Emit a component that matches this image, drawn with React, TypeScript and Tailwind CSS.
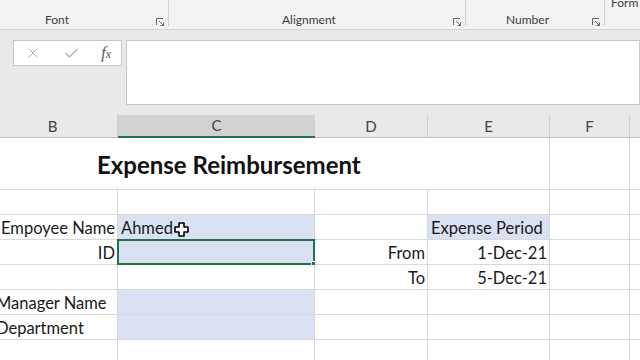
import { X, Check } from "lucide-react";

type CellProps = {
  text?: string;
  align?: "left" | "right";
  fill?: boolean;
  selected?: boolean;
  indent?: boolean;
};

function Cell({ text, align = "left", fill, selected, indent }: CellProps) {
  return (
    <div
      className={`relative h-[25px] border-r border-b border-[#d9d9d9] flex items-center overflow-visible whitespace-nowrap pt-[3px] pr-[2px] text-[16.5px] text-[#1a1a1a] ${
        indent ? "pl-[8px]" : "pl-[3px]"
      } ${align === "right" ? "justify-end" : "justify-start"} ${fill ? "bg-[#d9e1f2]" : "bg-white"}`}
    >
      {text}
      {selected && (
        <div className="absolute -left-[1px] -top-[1px] right-[-1px] bottom-[-1px] border-2 border-[#217346]">
          <div className="absolute -right-[4px] -bottom-[4px] w-[6px] h-[6px] bg-[#217346] border border-white" />
        </div>
      )}
    </div>
  );
}

function Launcher() {
  return (
    <svg width="8" height="8" viewBox="0 0 8 8" className="text-[#666]">
      <path d="M0.5 7V0.5H7" fill="none" stroke="currentColor" strokeWidth="1" />
      <path d="M3 3L7.5 7.5M4.5 7.5H7.5V4.5" fill="none" stroke="currentColor" strokeWidth="1" />
    </svg>
  );
}

function RibbonGroup({ label, width, pad }: { label: string; width: string; pad: string }) {
  return (
    <div className={`relative h-[26px] border-r border-[#d2d2d2] flex items-end ${pad} ${width}`}>
      <span className="text-[12px] text-[#3c3c3c] leading-none">{label}</span>
      <div className="absolute right-[4px] bottom-[0px]">
        <Launcher />
      </div>
    </div>
  );
}

export default function App() {
  const cols = ["B", "C", "D", "E", "F", ""];
  return (
    <div className="w-[640px] h-[360px] overflow-hidden bg-white font-['Lato',sans-serif]">
      {/* ribbon */}
      <div className="h-[30px] bg-[#f3f3f3] border-b border-[#d4d4d4] flex">
        <RibbonGroup label="Font" width="w-[169px]" pad="pl-[45px]" />
        <RibbonGroup label="Alignment" width="w-[297px]" pad="pl-[113px]" />
        <RibbonGroup label="Number" width="w-[139px]" pad="pl-[40px]" />
        <div className="pl-[6px] text-[12px] text-[#3c3c3c] leading-none mt-[-3px]">Form</div>
      </div>

      {/* formula bar */}
      <div className="h-[85px] bg-[#e9e9e9] flex items-start gap-[4px] pt-[10px] pl-[13px]">
        <div className="w-[109px] h-[26px] bg-white border border-[#c8c8c8] flex items-center justify-between pl-[11px] pr-[10px]">
          <X size={16} strokeWidth={1.5} className="text-[#b0b0b0]" />
          <Check size={17} strokeWidth={1.8} className="text-[#b0b0b0]" />
          <span className="font-['Liberation_Serif',serif] italic text-[16px] text-[#555] leading-none">
            f<span className="text-[12px]">x</span>
          </span>
        </div>
        <div className="flex-1 h-[65px] bg-white border border-[#c8c8c8]" />
      </div>

      {/* sheet */}
      <div className="relative ml-[-12px] grid grid-cols-[130px_197px_113px_122px_80px_20px]">
        {cols.map((c) => (
          <div
            key={c || "g"}
            className={`h-[23px] flex items-center justify-center text-[15px] text-[#444] ${
              c === "C"
                ? "bg-[#d2d2d2] border-b-2 border-b-[#217346]"
                : "bg-[#e9e9e9] border-r border-r-[#cfcfcf] border-b border-b-[#bdbdbd]"
            }`}
          >
            {c}
          </div>
        ))}

        {/* title row */}
        <div className="col-span-4 h-[52px] border-r border-b border-[#d9d9d9] flex items-center pt-[3px] pl-[109px] text-[24px] font-bold text-[#111] whitespace-nowrap">
          Expense Reimbursement
        </div>
        <div className="h-[52px] border-r border-b border-[#d9d9d9]" />
        <div className="h-[52px] border-r border-b border-[#d9d9d9]" />

        <Cell />
        <Cell />
        <Cell />
        <Cell />
        <Cell />
        <Cell />

        <Cell text="Empoyee Name" align="right" />
        <Cell text="Ahmed" fill />
        <Cell />
        <Cell text="Expense Period" fill />
        <Cell />
        <Cell />

        <Cell text="ID" align="right" />
        <Cell fill selected />
        <Cell text="From" align="right" />
        <Cell text="1-Dec-21" align="right" />
        <Cell />
        <Cell />

        <Cell />
        <Cell />
        <Cell text="To" align="right" />
        <Cell text="5-Dec-21" align="right" />
        <Cell />
        <Cell />

        <Cell text="Manager Name" indent />
        <Cell fill />
        <Cell />
        <Cell />
        <Cell />
        <Cell />

        <Cell text="Department" indent />
        <Cell fill />
        <Cell />
        <Cell />
        <Cell />
        <Cell />

        <Cell />
        <Cell />
        <Cell />
        <Cell />
        <Cell />
        <Cell />

        {/* mouse cursor */}
        <svg
          width="15"
          height="15"
          viewBox="0 0 15 15"
          className="absolute left-[186px] top-[107px]"
        >
          <path
            d="M5 1H10V5H14V10H10V14H5V10H1V5H5Z"
            fill="white"
            stroke="black"
            strokeWidth="1.6"
            strokeLinejoin="round"
          />
        </svg>
      </div>
    </div>
  );
}
